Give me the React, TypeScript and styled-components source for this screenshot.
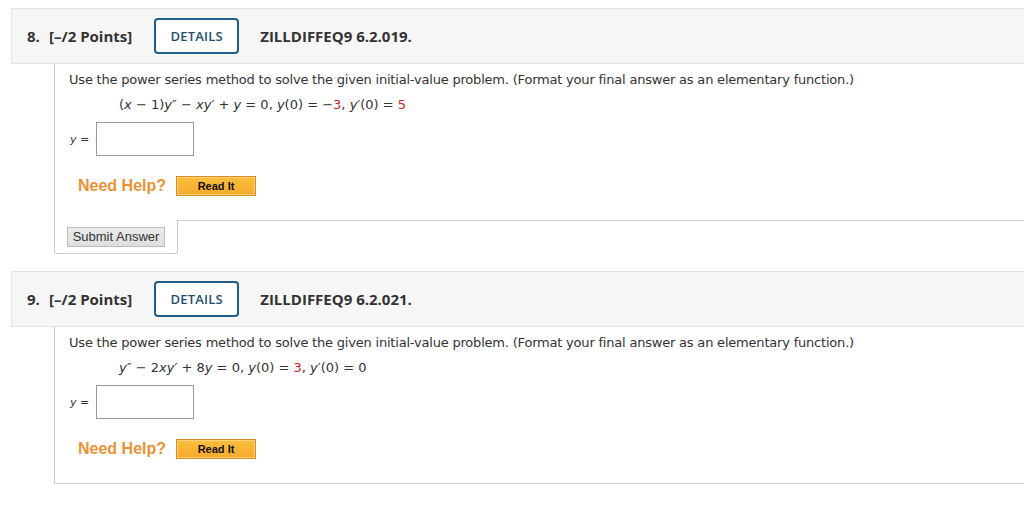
import React from "react";
import styled, { createGlobalStyle } from "styled-components";

const Global = createGlobalStyle`
  html, body { margin: 0; padding: 0; background: #fff; }
  body { font-family: "DejaVu Sans", Verdana, sans-serif; color: #333; }
`;

const Page = styled.div`
  padding: 8px 0 0 11px;
  display: flex;
  flex-direction: column;
  gap: 17px;
`;

const QuestionBlock = styled.section`
  display: flex;
  flex-direction: column;
`;

const Header = styled.div`
  height: 56px;
  box-sizing: border-box;
  background: #f6f6f6;
  border: 1px solid #e3e3e3;
  border-right: none;
  display: flex;
  align-items: center;
  padding-left: 15px;
  font-family: "Open Sans", sans-serif;
  font-weight: 700;
  font-size: 15px;
  color: #333;
`;

const Number = styled.span`
  width: 22px;
`;

const Points = styled.span`
  margin-right: 22px;
`;

const DetailsButton = styled.button`
  height: 36px;
  width: 85px;
  box-sizing: border-box;
  border: 2px solid #215d8a;
  border-radius: 4px;
  background: #fff;
  color: #1f4e74;
  font-family: "Open Sans", sans-serif;
  font-weight: 600;
  font-size: 13px;
  letter-spacing: 0.2px;
  margin-right: 21px;
  padding: 0;
`;

const Code = styled.span``;

const Body = styled.div`
  margin-left: 43px;
  border-left: 1px solid #ccc;
  border-bottom: 1px solid #ccc;
  padding: 7px 0 0 14px;
  font-size: 13px;
  color: #333;
`;

const Prompt = styled.div`
  line-height: 18px;
  height: 18px;
  letter-spacing: -0.2px;
`;

const Equation = styled.div`
  line-height: 18px;
  margin: 7px 0 0 50px;
  white-space: pre;
`;

const V = styled.i``;

const Red = styled.span`
  color: #c22;
`;

const AnswerRow = styled.div`
  display: flex;
  align-items: center;
  margin-top: 8px;
  gap: 7px;
`;

const YLabel = styled.span`
  font-size: 11px;
  padding-left: 1px;
`;

const AnswerInput = styled.input`
  width: 98px;
  height: 34px;
  box-sizing: border-box;
  border: 1px solid #9a9a9a;
  margin: 0;
  padding: 0;
  background: #fff;
`;

const HelpRow = styled.div`
  display: flex;
  align-items: center;
  margin: 20px 0 0 9px;
  padding-bottom: 24px;
  gap: 10px;
`;

const NeedHelp = styled.span`
  font-family: "Liberation Sans", Arial, sans-serif;
  font-weight: 700;
  font-size: 16px;
  color: #ea9233;
`;

const ReadIt = styled.button`
  width: 80px;
  height: 20px;
  box-sizing: border-box;
  border: 1px solid #dc8a22;
  box-shadow: inset 0 0 0 1px #fcd27a;
  background: linear-gradient(#fbbf3f, #f7a92b);
  font-family: "Liberation Sans", Arial, sans-serif;
  font-weight: 700;
  font-size: 11px;
  color: #111;
  padding: 0;
`;

const SubmitTab = styled.div`
  margin-left: 43px;
  margin-top: -1px;
  width: 124px;
  height: 34px;
  box-sizing: border-box;
  border: 1px solid #ccc;
  border-top: none;
  border-radius: 0 0 3px 3px;
  background: #fff;
  display: flex;
  align-items: flex-start;
  padding: 7px 0 0 12px;
`;

const SubmitButton = styled.button`
  height: 20px;
  width: 98px;
  box-sizing: border-box;
  border: 1px solid #bdbdbd;
  background: linear-gradient(#ececec, #dedede);
  font-family: "Liberation Sans", Arial, sans-serif;
  font-size: 13px;
  color: #333;
  padding: 0;
  line-height: 18px;
`;

type Q = {
  num: string;
  code: string;
  equation: React.ReactNode;
  submit: boolean;
};

const questions: Q[] = [
  {
    num: "8.",
    code: "ZILLDIFFEQ9 6.2.019.",
    submit: true,
    equation: (
      <>
        (<V>x</V> − 1)<V>y</V>″ − <V>xy</V>′ + <V>y</V> = 0, <V>y</V>(0) = −<Red>3</Red>, <V>y</V>′(0) = <Red>5</Red>
      </>
    ),
  },
  {
    num: "9.",
    code: "ZILLDIFFEQ9 6.2.021.",
    submit: false,
    equation: (
      <>
        <V>y</V>″ − 2<V>xy</V>′ + 8<V>y</V> = 0, <V>y</V>(0) = <Red>3</Red>, <V>y</V>′(0) = 0
      </>
    ),
  },
];

function Question({ q }: { q: Q }) {
  return (
    <QuestionBlock>
      <Header>
        <Number>{q.num}</Number>
        <Points>[–/2 Points]</Points>
        <DetailsButton>DETAILS</DetailsButton>
        <Code>{q.code}</Code>
      </Header>
      <Body>
        <Prompt>
          Use the power series method to solve the given initial-value problem. (Format your final answer as an elementary function.)
        </Prompt>
        <Equation>{q.equation}</Equation>
        <AnswerRow>
          <YLabel>
            <V>y</V> =
          </YLabel>
          <AnswerInput type="text" />
        </AnswerRow>
        <HelpRow>
          <NeedHelp>Need Help?</NeedHelp>
          <ReadIt>Read It</ReadIt>
        </HelpRow>
      </Body>
      {q.submit && (
        <SubmitTab>
          <SubmitButton>Submit Answer</SubmitButton>
        </SubmitTab>
      )}
    </QuestionBlock>
  );
}

export default function App() {
  return (
    <>
      <Global />
      <Page>
        {questions.map((q) => (
          <Question key={q.num} q={q} />
        ))}
      </Page>
    </>
  );
}
